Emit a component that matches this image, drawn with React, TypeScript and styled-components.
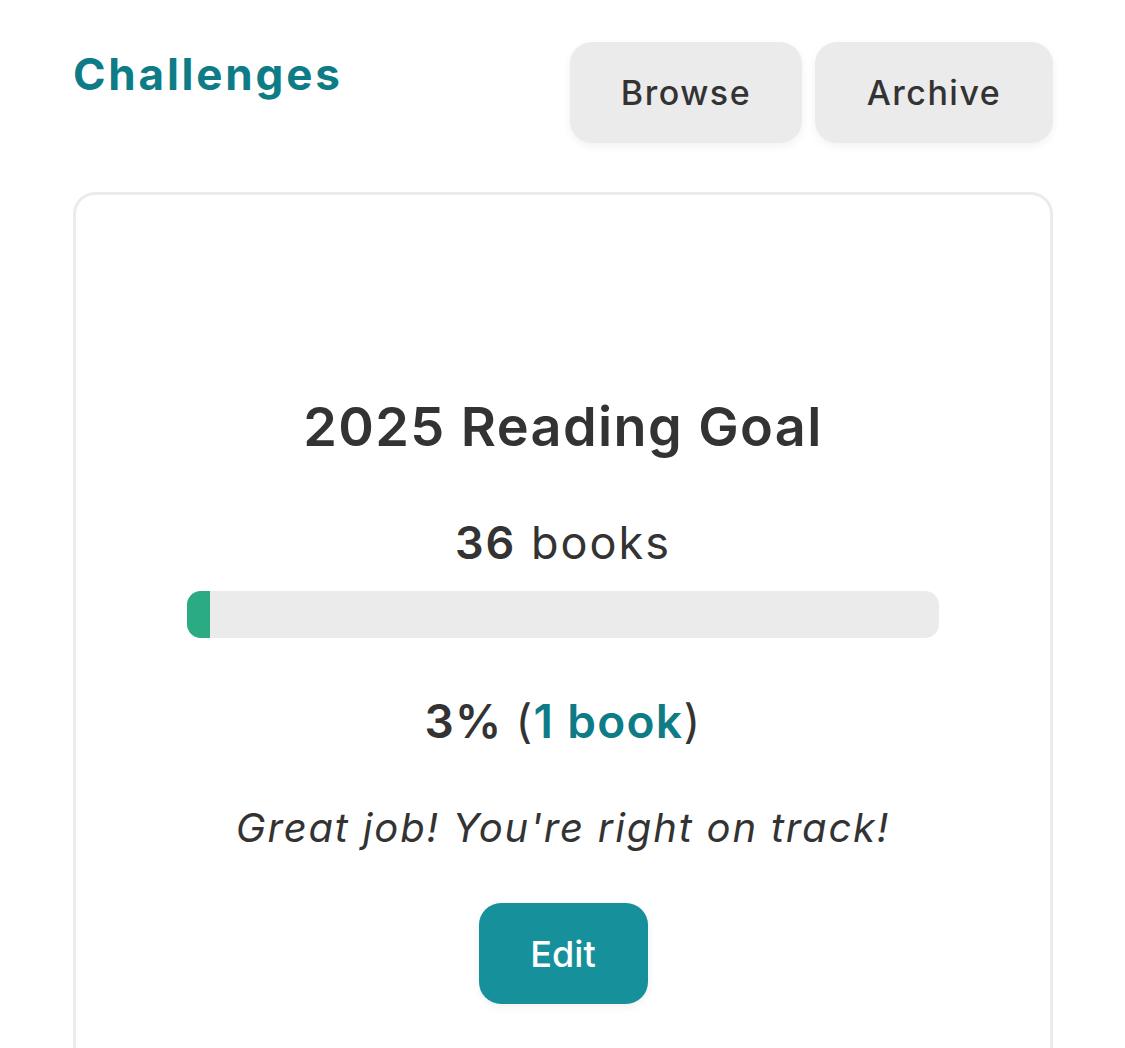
import styled, { createGlobalStyle } from "styled-components";

const GlobalStyle = createGlobalStyle`
  html, body {
    margin: 0;
    padding: 0;
    background: #ffffff;
  }
  body {
    font-family: Inter, "Noto Sans", "Liberation Sans", sans-serif;
    color: #333333;
  }
`;

const Page = styled.div`
  padding: 42px 72px 0 73px;
  display: flex;
  flex-direction: column;
  gap: 49px;
`;

const Header = styled.header`
  display: flex;
  justify-content: space-between;
  align-items: flex-start;
`;

const Title = styled.h1`
  margin: 0;
  padding-top: 4px;
  font-size: 44px;
  font-weight: 700;
  letter-spacing: 2.8px;
  color: #0e7c86;
  line-height: 56px;
`;

const Actions = styled.div`
  display: flex;
  gap: 13px;
`;

const NavButton = styled.button<{ $w: number }>`
  width: ${({ $w }) => $w}px;
  height: 101px;
  border: none;
  border-radius: 22px;
  background: #ebebeb;
  color: #333333;
  font-family: inherit;
  font-size: 34px;
  font-weight: 500;
  letter-spacing: 1.5px;
  box-shadow: 0 3px 8px rgba(0, 0, 0, 0.06);
  cursor: pointer;
`;

const Card = styled.section`
  border: 3px solid #ebebeb;
  border-bottom: none;
  border-radius: 22px 22px 0 0;
  padding: 196px 111px 40px;
  display: flex;
  flex-direction: column;
  align-items: center;
  min-height: 900px;
`;

const GoalTitle = styled.h2`
  margin: 0;
  font-size: 54px;
  font-weight: 600;
  letter-spacing: 1.4px;
  line-height: 72px;
  color: #333333;
`;

const Target = styled.div`
  margin-top: 50px;
  font-size: 45px;
  letter-spacing: 2px;
  line-height: 60px;
  font-weight: 400;
  strong {
    font-weight: 600;
  }
`;

const Track = styled.div`
  margin-top: 18px;
  width: 100%;
  height: 47px;
  border-radius: 14px;
  background: #ebebeb;
  overflow: hidden;
`;

const Fill = styled.div`
  height: 100%;
  background: #2aab84;
`;

const Progress = styled.div`
  margin-top: 52px;
  font-size: 46px;
  font-weight: 600;
  letter-spacing: 1.3px;
  line-height: 62px;
  span {
    color: #0e7c86;
  }
  em {
    font-style: normal;
    font-weight: 400;
  }
`;

const Message = styled.p`
  margin: 48px 0 0;
  font-size: 40px;
  font-style: italic;
  letter-spacing: 1.8px;
  line-height: 56px;
`;

const EditButton = styled.button`
  margin-top: 47px;
  width: 169px;
  height: 101px;
  border: none;
  border-radius: 22px;
  background: #16909a;
  color: #ffffff;
  font-family: inherit;
  font-size: 36px;
  font-weight: 500;
  box-shadow: 0 3px 8px rgba(0, 0, 0, 0.06);
  cursor: pointer;
`;

export default function App() {
  const percent = 3;
  return (
    <>
      <GlobalStyle />
      <Page>
        <Header>
          <Title>Challenges</Title>
          <Actions>
            <NavButton $w={232}>Browse</NavButton>
            <NavButton $w={238}>Archive</NavButton>
          </Actions>
        </Header>
        <Card>
          <GoalTitle>2025 Reading Goal</GoalTitle>
          <Target>
            <strong>36</strong> books
          </Target>
          <Track>
            <Fill style={{ width: `${percent}%` }} />
          </Track>
          <Progress>
            {percent}% <em>(</em>
            <span>1 book</span>
            <em>)</em>
          </Progress>
          <Message>Great job! You're right on track!</Message>
          <EditButton>Edit</EditButton>
        </Card>
      </Page>
    </>
  );
}
